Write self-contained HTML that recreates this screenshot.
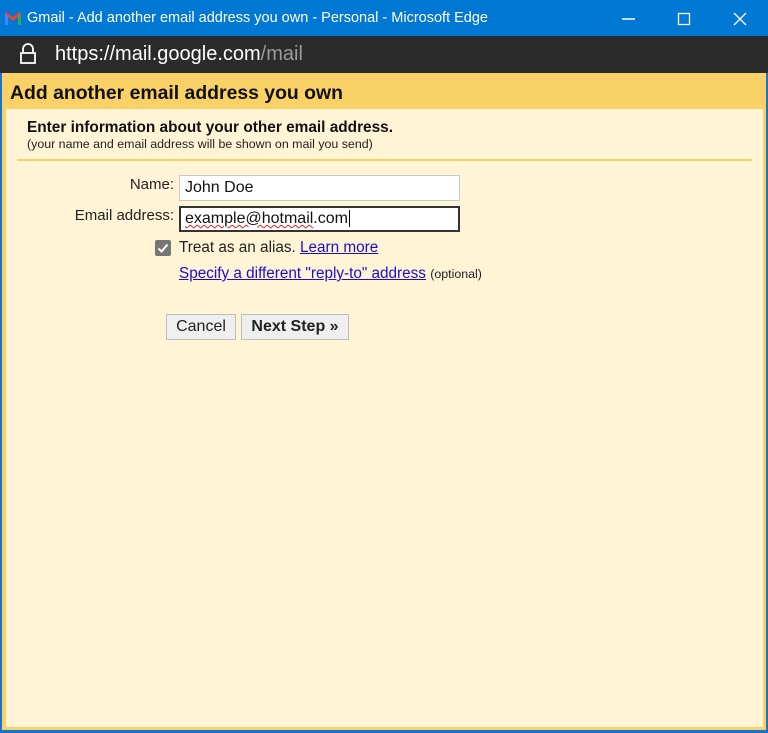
<!DOCTYPE html>
<html><head><style>
*{margin:0;padding:0;box-sizing:border-box}
body{width:768px;height:733px;overflow:hidden;font-family:"Liberation Sans",Arial,sans-serif;background:#1a73c8;position:relative}
.title{position:absolute;left:0;top:0;width:768px;height:36px;background:#0078d4;color:#fff;font-size:14.5px}
.title span{position:absolute;left:27px;top:10px}
.addr{position:absolute;left:0;top:36px;width:768px;height:37px;background:#2b2b2b;color:#fff;font-size:20px}
.addr span{position:absolute;left:55px;top:7px}
.win{position:absolute;left:2px;top:73px;width:764px;height:657px;background:#fad166}
.hdr{position:absolute;left:10px;top:82px;font-weight:bold;font-size:19.4px;color:#111}
.body{position:absolute;left:6px;top:109px;width:757px;height:618px;background:#fff5d6}
.abs{position:absolute}
.inp{position:absolute;left:179px;width:281px;height:26px;background:#fff;border:1px solid #c8c8c8;font-size:16px;padding:3px 5px;color:#111}
.lbl{position:absolute;font-size:15px;color:#222;text-align:right;width:174px;left:0}
a{color:#1a0dcc;text-decoration:underline}
.btn{position:absolute;top:314px;height:26px;background:#efefef;border:1px solid #bdbdbd;font-size:16px;text-align:center;line-height:24px;color:#222}
</style></head><body>
<div class="title">
<svg class="abs" style="left:4px;top:11px" width="18" height="14" viewBox="0 0 18 14"><path d="M1 2v12h3V6l5 4 5-4v8h3V2l-2-1-6 5-6-5z" fill="#ea4335"/><path d="M1 2v12h3V5z" fill="#4285f4"/><path d="M14 5v9h3V2z" fill="#34a853"/></svg>
<span>Gmail - Add another email address you own - Personal - Microsoft Edge</span>
<svg class="abs" style="left:620px;top:10px" width="140" height="18"><line x1="2" y1="9" x2="15" y2="9" stroke="#fff" stroke-width="1.5"/><rect x="58.5" y="3.5" width="11" height="11" fill="none" stroke="#fff" stroke-width="1.3"/><path d="M114 3l12 12M126 3l-12 12" stroke="#fff" stroke-width="1.4"/></svg>
</div>
<div class="addr">
<svg class="abs" style="left:19px;top:7px" width="18" height="22"><path d="M4 10V6a5 5 0 0 1 10 0v4" fill="none" stroke="#fff" stroke-width="1.8"/><rect x="2" y="10" width="14" height="10" fill="none" stroke="#fff" stroke-width="1.8"/></svg>
<span>https://mail.google.com<span style="position:static;color:#9a9a9a">/mail</span></span>
</div>
<div class="win"></div>
<div class="hdr">Add another email address you own</div>
<div class="body">
<div class="abs" style="left:21px;top:10px;font-weight:bold;font-size:15.4px;color:#111">Enter information about your other email address.</div>
<div class="abs" style="left:21px;top:28px;font-size:12.4px;color:#222">(your name and email address will be shown on mail you send)</div>
<div class="abs" style="left:11px;top:50px;width:735px;height:2px;background:#fad166"></div>
</div>
<div class="lbl" style="top:176px">Name:</div>
<div class="inp" style="top:175px">John Doe</div>
<div class="lbl" style="top:207px">Email address:</div>
<div class="inp" style="top:206px;border:2px solid #333;padding:2px 4px"><span style="text-decoration:underline wavy #e02020;text-decoration-thickness:1px">example@hotmail</span>.com<span style="border-left:1px solid #000;margin-left:1px"></span></div>
<div class="abs" style="left:155px;top:240px;width:16px;height:16px;background:#767676;border-radius:2px"><svg width="16" height="16"><path d="M3.5 8.5l3 3 6-7" fill="none" stroke="#fff" stroke-width="2"/></svg></div>
<div class="abs" style="left:179px;top:239px;font-size:15.3px;color:#222">Treat as an alias. <a>Learn more</a></div>
<div class="abs" style="left:179px;top:265px;font-size:15.3px;color:#222"><a>Specify a different "reply-to" address</a> <span style="font-size:12.4px">(optional)</span></div>
<div class="btn" style="left:166px;width:70px">Cancel</div>
<div class="btn" style="left:241px;width:108px;font-weight:bold">Next Step »</div>
</body></html>
